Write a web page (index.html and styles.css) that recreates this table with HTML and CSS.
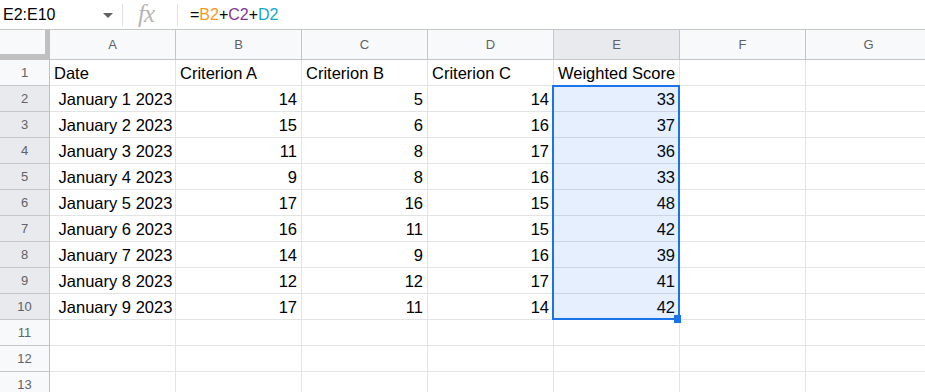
FILE: index.html
```html
<!DOCTYPE html>
<html lang="en">
<head>
    <meta charset="UTF-8">
    <meta name="viewport" content="width=device-width, initial-scale=1.0">
    <title>Scores</title>
    <link rel="stylesheet" href="styles.css">
</head>
<body>
    <div class="formula-bar">
        <div class="name-box">
            <span class="range">E2:E10</span>
            <span class="caret"></span>
        </div>
        <div class="fx">fx</div>
        <div class="formula">=<span class="ref-b">B2</span>+<span class="ref-c">C2</span>+<span class="ref-d">D2</span></div>
    </div>

    <div class="sheet" id="sheet">
        <div class="selection"><span class="handle"></span></div>
    </div>

    <script>
        const letters = ['A', 'B', 'C', 'D', 'E', 'F', 'G'];
        const rows = [
            ['Date', 'Criterion A', 'Criterion B', 'Criterion C', 'Weighted Score'],
            [' January 1 2023', 14, 5, 14, 33],
            [' January 2 2023', 15, 6, 16, 37],
            [' January 3 2023', 11, 8, 17, 36],
            [' January 4 2023', 9, 8, 16, 33],
            [' January 5 2023', 17, 16, 15, 48],
            [' January 6 2023', 16, 11, 15, 42],
            [' January 7 2023', 14, 9, 16, 39],
            [' January 8 2023', 12, 12, 17, 41],
            [' January 9 2023', 17, 11, 14, 42],
            [], [], []
        ];

        const sheet = document.getElementById('sheet');

        function cell(cls, text) {
            const div = document.createElement('div');
            div.className = cls;
            div.textContent = text;
            sheet.appendChild(div);
        }

        cell('corner', '');
        letters.forEach(l => cell(l === 'E' ? 'col-head active' : 'col-head', l));

        rows.forEach((row, i) => {
            const selected = i >= 1 && i <= 9;
            cell(selected ? 'row-head active' : 'row-head', i + 1);
            letters.forEach((l, j) => {
                const value = row[j] === undefined ? '' : row[j];
                cell(typeof value === 'number' ? 'cell num' : 'cell', value);
            });
        });
    </script>
</body>
</html>
```

FILE: styles.css
```css
body {
    margin: 0;
    overflow: hidden;
    font-family: "Liberation Sans", Arial, sans-serif;
    background: #fff;
    color: #000;
}

/* top strip with the range box and formula */
.formula-bar {
    display: flex;
    align-items: center;
    height: 29px;
    border-bottom: 1px solid #c4c7c5;
}

.name-box {
    display: flex;
    align-items: center;
    justify-content: space-between;
    width: 110px;
    padding: 0 9px 0 3px;
    border-right: 1px solid #e0e0e0;
    height: 22px;
    font-size: 16px;
}

.caret {
    width: 0;
    height: 0;
    border-left: 5px solid transparent;
    border-right: 5px solid transparent;
    border-top: 5px solid #616161;
    margin-top: 2px;
}

.fx {
    width: 55px;
    padding-left: 15px;
    box-sizing: border-box;
    height: 22px;
    line-height: 20px;
    font-family: "Liberation Serif", "Times New Roman", serif;
    font-style: italic;
    font-size: 25px;
    color: #b6b6b6;
    border-right: 1px solid #e0e0e0;
    letter-spacing: -1px;
}

.formula {
    padding-left: 12px;
    font-size: 16px;
}

.ref-b { color: #f7981d; }
.ref-c { color: #7e3794; }
.ref-d { color: #11a9cc; }

/* grid */
.sheet {
    position: relative;
    display: grid;
    grid-template-columns: 50px repeat(7, 126px);
    grid-template-rows: 30px;
    grid-auto-rows: 26px;
}

.sheet > div {
    box-sizing: border-box;
}

.corner {
    background: #f8f9fa;
    border-right: 5px solid #c0c0c0;
    border-bottom: 6px solid #c0c0c0;
}

.col-head {
    display: flex;
    align-items: center;
    justify-content: center;
    background: #f8f9fa;
    border-right: 1px solid #c4c7c5;
    border-bottom: 1px solid #c4c7c5;
    color: #5f6368;
    font-size: 13px;
}

.row-head {
    display: flex;
    align-items: center;
    justify-content: center;
    background: #f8f9fa;
    border-right: 1px solid #c0c0c0;
    border-bottom: 1px solid #c4c7c5;
    color: #5f6368;
    font-size: 13px;
}

.active {
    background: #e8eaed;
}

.cell {
    padding: 1px 4px 0;
    border-right: 1px solid #e2e3e3;
    border-bottom: 1px solid #e2e3e3;
    font-size: 16.5px;
    line-height: 25px;
    white-space: pre;
    overflow: hidden;
}

.num {
    text-align: right;
}

/* highlighted range E2:E10 */
.selection {
    position: absolute;
    left: 552px;
    top: 55px;
    width: 128px;
    height: 235px;
    box-sizing: border-box;
    border: 2px solid #1a73e8;
    background: rgba(14, 101, 235, 0.1);
    pointer-events: none;
}

.handle {
    position: absolute;
    right: -3px;
    bottom: -5px;
    width: 7px;
    height: 8px;
    background: #1a73e8;
}
```
